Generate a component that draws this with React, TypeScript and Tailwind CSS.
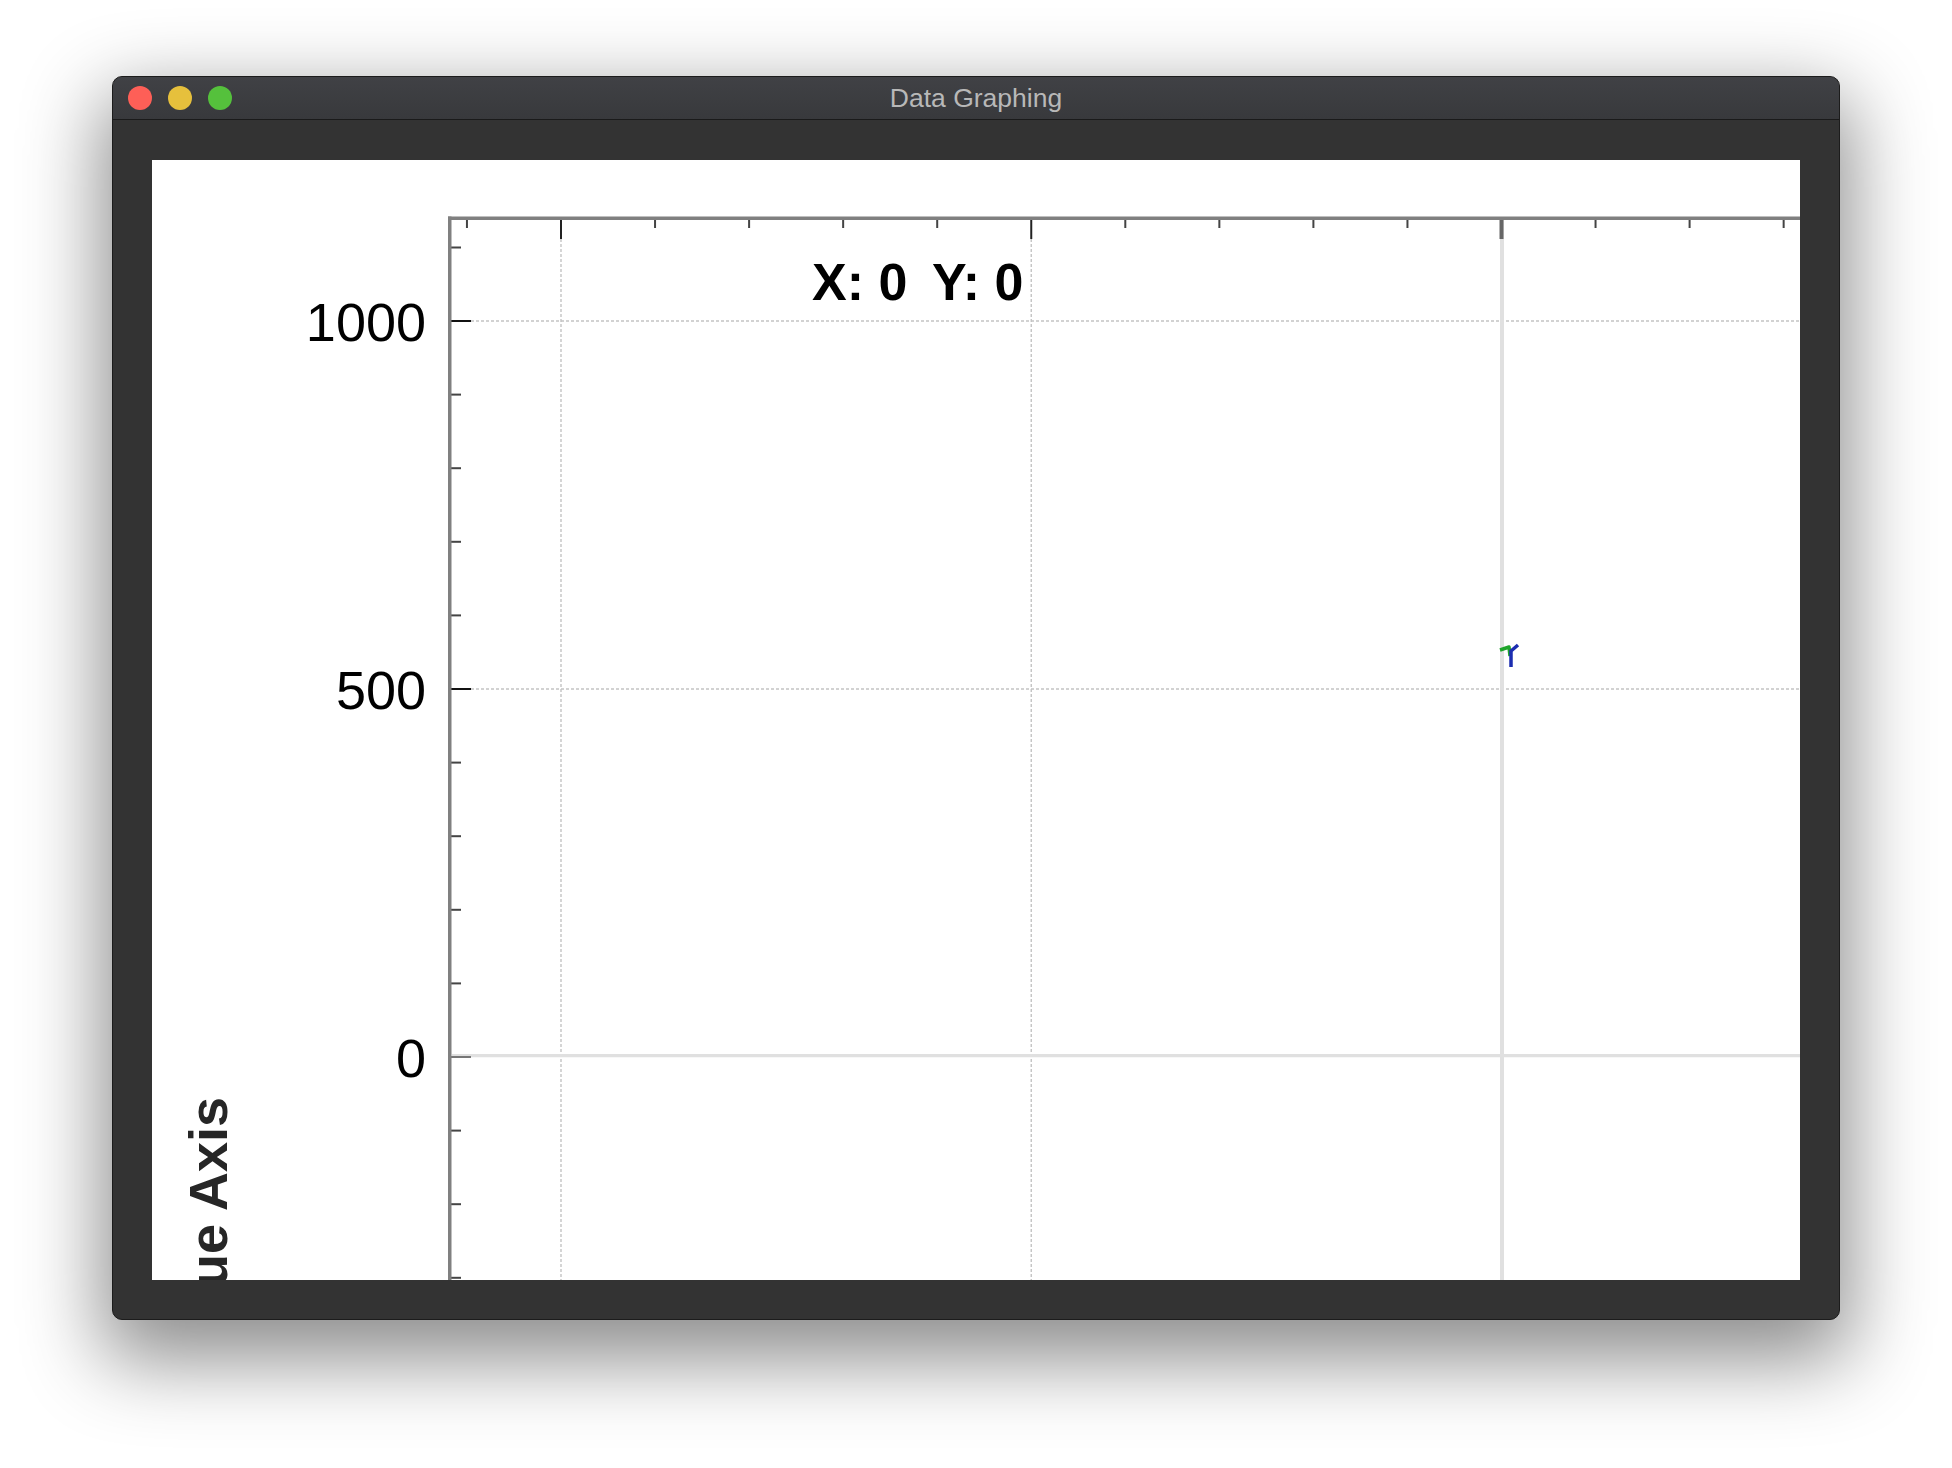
import React from "react";

const FONT = "'Liberation Sans', Arial, Helvetica, sans-serif";

function Chart() {
  const W = 1648;
  const H = 1120;
  const axisX = 297.75;
  const axisY = 58.25;
  const yMajor = [161, 529, 897];
  const yLabels = ["1000", "500", "0"];
  const ySpacing = 73.6;
  const yMinor: number[] = [];
  for (let k = -1; k <= 13; k++) {
    const y = 161 + k * ySpacing;
    if (k % 5 !== 0 && y > 62 && y < H) yMinor.push(y);
  }
  const xMajor = [409, 879.25, 1349.5];
  const xSpacing = 94.05;
  const xMinor: number[] = [];
  for (let k = -1; k <= 13; k++) {
    const x = 409 + k * xSpacing;
    if (k % 5 !== 0 && x > 300 && x < W) xMinor.push(x);
  }

  return (
    <svg width={W} height={H} viewBox={`0 0 ${W} ${H}`} className="block">
      {/* dashed grid */}
      {[161, 529].map((y) => (
        <line key={"gh" + y} x1={319} x2={W} y1={y} y2={y} stroke="#c4c4c4" strokeWidth={1.4} strokeDasharray="3 2" />
      ))}
      {[409, 879.25].map((x) => (
        <line key={"gv" + x} x1={x} x2={x} y1={79} y2={H} stroke="#c4c4c4" strokeWidth={1.4} strokeDasharray="3 2" />
      ))}
      {/* zero lines */}
      <line x1={300} x2={W} y1={895.6} y2={895.6} stroke="#e0e0e0" strokeWidth={3.4} />
      <line x1={1350} x2={1350} y1={60} y2={H} stroke="#e0e0e0" strokeWidth={4} />

      {/* left axis ticks */}
      {yMinor.map((y) => (
        <line key={"ym" + y} x1={299} x2={309} y1={y} y2={y} stroke="#444" strokeWidth={2} />
      ))}
      {yMajor.map((y, i) => (
        <line key={"yM" + y} x1={299} x2={319} y1={y} y2={y} stroke={i === 2 ? "#777" : "#111"} strokeWidth={2} />
      ))}
      {/* top axis ticks */}
      {xMinor.map((x) => (
        <line key={"xm" + x} x1={x} x2={x} y1={59} y2={68} stroke="#444" strokeWidth={2} />
      ))}
      {xMajor.map((x, i) => (
        <line key={"xM" + x} x1={x} x2={x} y1={59} y2={79} stroke={i === 2 ? "#666" : "#222"} strokeWidth={i === 2 ? 4 : 2} />
      ))}

      {/* axes */}
      <line x1={axisX} x2={axisX} y1={56.5} y2={H} stroke="#808080" strokeWidth={3.5} />
      <line x1={296} x2={W} y1={axisY} y2={axisY} stroke="#808080" strokeWidth={3.5} />

      {/* tick labels */}
      {yMajor.map((y, i) => (
        <text key={"yl" + y} x={274} y={y + 19.5} textAnchor="end" fontFamily={FONT} fontSize={54} fill="#000">
          {yLabels[i]}
        </text>
      ))}

      {/* coordinate readout */}
      <text x={660} y={140} fontFamily={FONT} fontSize={52} fontWeight={700} fill="#000">
        X: 0
      </text>
      <text x={780} y={140} fontFamily={FONT} fontSize={52} fontWeight={700} fill="#000">
        Y: 0
      </text>

      {/* axis title */}
      <text
        transform="translate(75,937) rotate(-90)"
        textAnchor="end"
        fontFamily={FONT}
        fontSize={54}
        fontWeight={700}
        fill="#262626"
      >
        Value Axis
      </text>

      {/* marker */}
      <polyline points="1348,490 1357,487 1358,496" fill="none" stroke="#1fa52b" strokeWidth={3.5} strokeLinejoin="round" />
      <polyline points="1359,507 1359,491 1366,485" fill="none" stroke="#1b2db0" strokeWidth={3.5} strokeLinejoin="round" />
    </svg>
  );
}

export default function App() {
  return (
    <div className="w-[1952px] h-[1468px] bg-white overflow-hidden pt-[76px] pl-[112px]">
      <div className="w-[1728px] h-[1244px] flex flex-col rounded-[10px] overflow-hidden border border-[#1c1c1c] bg-[#333333] shadow-[0_30px_80px_10px_rgba(0,0,0,0.45)]">
        <div className="h-[43px] shrink-0 grid grid-cols-[1fr_auto_1fr] items-center border-b border-[#1a1a1a] bg-gradient-to-b from-[#404145] to-[#38393c]">
          <div className="flex items-center gap-[16px] pl-[15px]">
            <span className="w-[24px] h-[24px] rounded-full bg-[#fe5f57]" />
            <span className="w-[24px] h-[24px] rounded-full bg-[#e6c03c]" />
            <span className="w-[24px] h-[24px] rounded-full bg-[#55c13c]" />
          </div>
          <div className="text-[26.5px] leading-none text-[#b8b8b8] font-['Liberation_Sans',Arial,sans-serif]">
            Data Graphing
          </div>
          <div />
        </div>
        <div className="flex-1 pt-[40px] pl-[39px] pr-[39px] pb-[39px]">
          <div className="w-[1648px] h-[1120px] bg-white overflow-hidden">
            <Chart />
          </div>
        </div>
      </div>
    </div>
  );
}
